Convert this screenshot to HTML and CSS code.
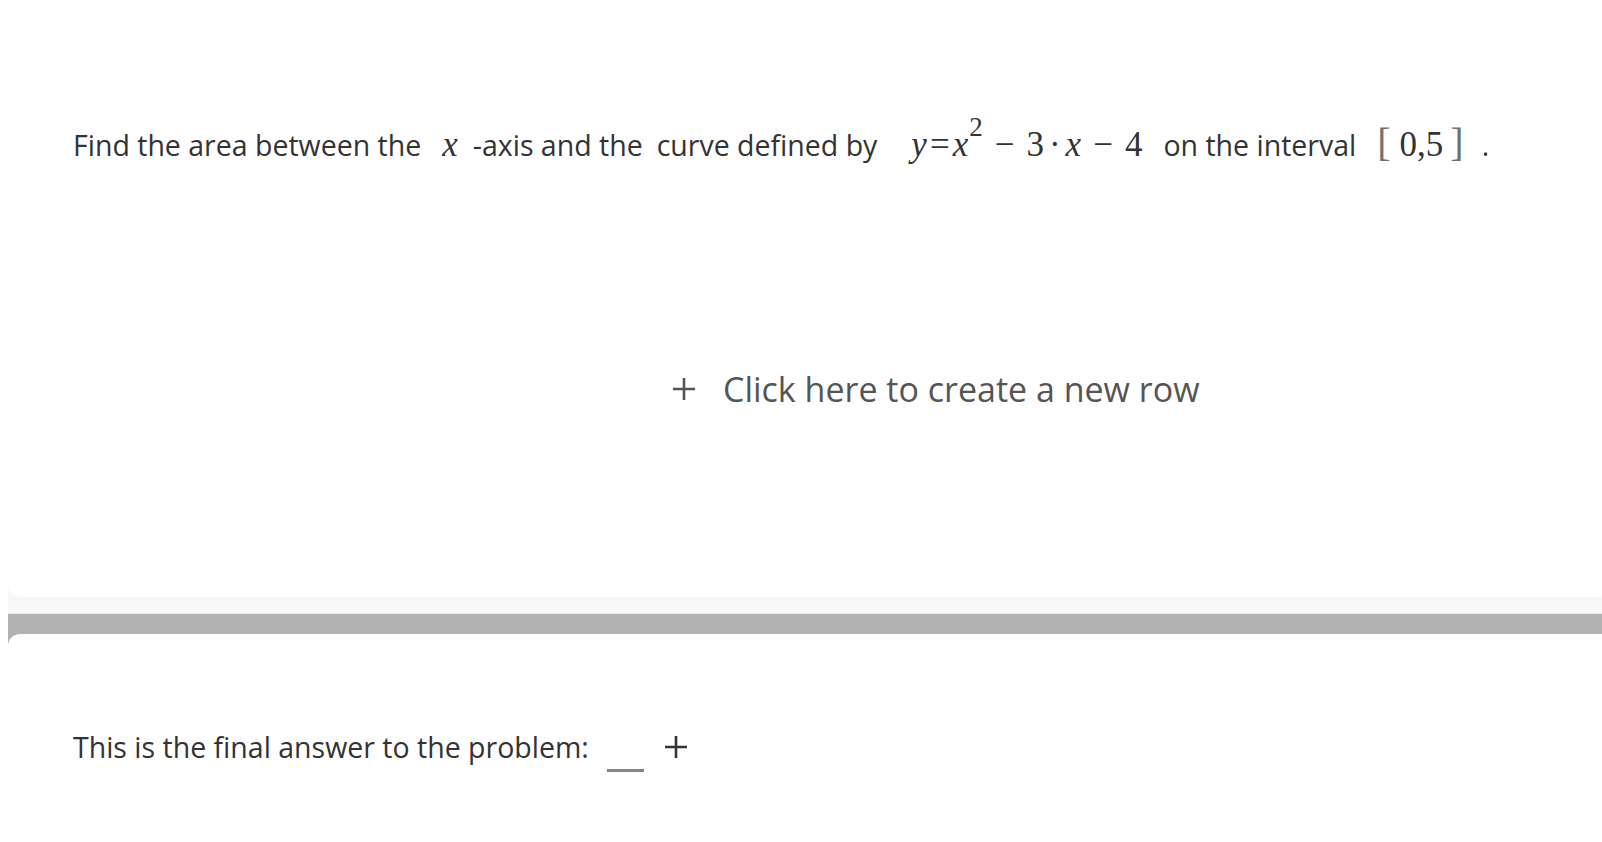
FILE: index.html
```html
<!DOCTYPE html>
<html>
<head>
<meta charset="utf-8">
<link rel="stylesheet" href="styles.css">
</head>
<body>
<div class="sheet">
  <div class="upper">
    <section class="card card-top">
      <div class="question">
        <span class="txt">Find the area between the</span>
        <span class="mvar m-x">x</span>
        <span class="txt t-axis">-axis and the</span>
        <span class="txt t-curve">curve defined by</span>
        <span class="math m-eq"><i>y</i><span class="rel">=</span><i>x</i><sup>2</sup><span class="bin">−</span>3<span class="bin dot">·</span><i>x</i><span class="bin">−</span>4</span>
        <span class="txt t-on">on the interval</span>
        <span class="math m-int"><span class="br br-l">[</span>0,5<span class="br br-r">]</span></span>
        <span class="txt t-dot">.</span>
      </div>
      <div class="newrow">
        <svg class="plus plus-light" width="24" height="24" viewBox="0 0 24 24"><path d="M12 1v22M1 12h22" stroke="#555" stroke-width="2.6" fill="none"/></svg>
        <span class="newrow-text">Click here to create a new row</span>
      </div>
    </section>
    <div class="shade"></div>
  </div>
  <div class="lower">
    <section class="card card-bottom">
      <div class="answer">
        <span class="txt">This is the final answer to the problem:</span>
        <span class="blank"></span>
        <svg class="plus plus-dark" width="24" height="24" viewBox="0 0 24 24"><path d="M12 1v22M1 12h22" stroke="#333" stroke-width="2.6" fill="none"/></svg>
      </div>
    </section>
  </div>
</div>
</body>
</html>
```

FILE: styles.css
```css
html, body {
  margin: 0;
  padding: 0;
  background: #ffffff;
  overflow: hidden;
}
body {
  width: 1602px;
  height: 842px;
  font-family: "Open Sans", "Noto Sans", sans-serif;
  color: #333333;
}
.sheet {
  margin-left: 8px;
  width: 1594px;
}
.upper {
  background: linear-gradient(#dcdcdc, #f8f8f8);
}
.card {
  background: #ffffff;
}
.card-top {
  height: 597px;
  border-bottom-left-radius: 12px;
  display: flex;
  flex-direction: column;
}
.shade {
  height: 16px;
  border-bottom: 1px solid #ebebeb;
}
.lower {
  background: #b2b2b2;
  padding-top: 20px;
}
.card-bottom {
  height: 208px;
  border-top-left-radius: 12px;
  display: flex;
  flex-direction: column;
}
.question {
  margin-top: 118px;
  height: 50px;
  padding-left: 65px;
  display: flex;
  align-items: baseline;
  white-space: nowrap;
  font-size: 28.5px;
  line-height: 50px;
}
.txt {
  color: #333333;
}
.mvar, .math {
  font-family: "Liberation Serif", "DejaVu Serif", serif;
  font-size: 35px;
  color: #333333;
}
.mvar, .math i {
  font-style: italic;
}
.m-x { margin-left: 21px; }
.t-axis { margin-left: 15px; }
.t-curve { margin-left: 14px; }
.m-eq { margin-left: 34px; }
.t-on { margin-left: 21px; }
.m-int { margin-left: 21px; }
.t-dot { margin-left: 18px; }
.math sup {
  font-size: 27px;
  line-height: 0;
  position: relative;
  top: -7px;
  margin-left: 1px;
}
.rel {
  margin: 0 3px;
}
.bin {
  margin: 0 12px;
}
.bin.dot {
  margin: 0 5px;
}
.br {
  font-size: 40px;
  color: #707070;
}
.br-l { margin-right: 9px; }
.br-r { margin-left: 7px; }
.newrow {
  margin-top: 191px;
  height: 60px;
  padding-left: 664px;
  display: flex;
  align-items: center;
}
.newrow-text {
  margin-left: 27px;
  font-size: 34px;
  color: #555555;
  white-space: nowrap;
}
.answer {
  margin-top: 93px;
  height: 40px;
  padding-left: 65px;
  display: flex;
  align-items: center;
  font-size: 28.5px;
  white-space: nowrap;
}
.blank {
  width: 37px;
  height: 3px;
  background: #80848f;
  margin-left: 18px;
  align-self: flex-end;
  margin-bottom: -5px;
}
.plus-dark {
  margin-left: 20px;
}
```
